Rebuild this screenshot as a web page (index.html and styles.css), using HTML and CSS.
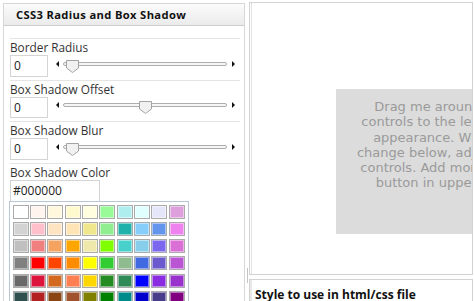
FILE: index.html
```html
<!DOCTYPE html>
<html>
<head>
<meta charset="utf-8">
<link rel="stylesheet" href="styles.css">
</head>
<body>
<div class="app">
  <aside class="left">
    <div class="left-head">CSS3 Radius and Box Shadow</div>
    <div class="left-body">
      <div class="field">
        <div class="label">Border Radius</div>
        <div class="row">
          <div class="num">0</div>
          <div class="slider">
            <span class="arr arr-l"></span>
            <div class="track">
              <svg class="thumb" style="left:1.7px" width="13" height="13" viewBox="0 0 13 13"><polygon points="0.5,0.5 12.5,0.5 12.5,8 6.5,12.5 0.5,8" fill="#f1f1f1" stroke="#a3a3a3"/></svg>
            </div>
            <span class="arr arr-r"></span>
          </div>
        </div>
      </div>
      <div class="field">
        <div class="label">Box Shadow Offset</div>
        <div class="row">
          <div class="num">0</div>
          <div class="slider">
            <span class="arr arr-l"></span>
            <div class="track">
              <svg class="thumb" style="left:75px" width="13" height="13" viewBox="0 0 13 13"><polygon points="0.5,0.5 12.5,0.5 12.5,8 6.5,12.5 0.5,8" fill="#f1f1f1" stroke="#a3a3a3"/></svg>
            </div>
            <span class="arr arr-r"></span>
          </div>
        </div>
      </div>
      <div class="field">
        <div class="label">Box Shadow Blur</div>
        <div class="row">
          <div class="num">0</div>
          <div class="slider">
            <span class="arr arr-l"></span>
            <div class="track">
              <svg class="thumb" style="left:1.7px" width="13" height="13" viewBox="0 0 13 13"><polygon points="0.5,0.5 12.5,0.5 12.5,8 6.5,12.5 0.5,8" fill="#f1f1f1" stroke="#a3a3a3"/></svg>
            </div>
            <span class="arr arr-r"></span>
          </div>
        </div>
      </div>
      <div class="field field-color">
        <div class="label">Box Shadow Color</div>
        <div class="hex">#000000</div>
        <div class="palette">
          <span class="sw" style="background:#ffffff"></span>
          <span class="sw" style="background:#fff5ee"></span>
          <span class="sw" style="background:#fff8dc"></span>
          <span class="sw" style="background:#fffacd"></span>
          <span class="sw" style="background:#ffffe0"></span>
          <span class="sw" style="background:#98fb98"></span>
          <span class="sw" style="background:#afeeee"></span>
          <span class="sw" style="background:#e0ffff"></span>
          <span class="sw" style="background:#e6e6fa"></span>
          <span class="sw" style="background:#dda0dd"></span>

          <span class="sw" style="background:#d3d3d3"></span>
          <span class="sw" style="background:#ffc0cb"></span>
          <span class="sw" style="background:#ffe4c4"></span>
          <span class="sw" style="background:#ffe4b5"></span>
          <span class="sw" style="background:#f0e68c"></span>
          <span class="sw" style="background:#90ee90"></span>
          <span class="sw" style="background:#20b2aa"></span>
          <span class="sw" style="background:#87cefa"></span>
          <span class="sw" style="background:#6495ed"></span>
          <span class="sw" style="background:#ee82ee"></span>

          <span class="sw" style="background:#c0c0c0"></span>
          <span class="sw" style="background:#f08080"></span>
          <span class="sw" style="background:#f4a460"></span>
          <span class="sw" style="background:#ffa500"></span>
          <span class="sw" style="background:#eee8aa"></span>
          <span class="sw" style="background:#7fff00"></span>
          <span class="sw" style="background:#48d1cc"></span>
          <span class="sw" style="background:#87ceeb"></span>
          <span class="sw" style="background:#7b68ee"></span>
          <span class="sw" style="background:#da70d6"></span>

          <span class="sw" style="background:#808080"></span>
          <span class="sw" style="background:#ff0000"></span>
          <span class="sw" style="background:#ff4500"></span>
          <span class="sw" style="background:#ff8c00"></span>
          <span class="sw" style="background:#ffff00"></span>
          <span class="sw" style="background:#32cd32"></span>
          <span class="sw" style="background:#8fbc8f"></span>
          <span class="sw" style="background:#4169e1"></span>
          <span class="sw" style="background:#6a5acd"></span>
          <span class="sw" style="background:#ba55d3"></span>

          <span class="sw" style="background:#696969"></span>
          <span class="sw" style="background:#dc143c"></span>
          <span class="sw" style="background:#d2691e"></span>
          <span class="sw" style="background:#ff7f50"></span>
          <span class="sw" style="background:#ffd700"></span>
          <span class="sw" style="background:#228b22"></span>
          <span class="sw" style="background:#2e8b57"></span>
          <span class="sw" style="background:#0000ff"></span>
          <span class="sw" style="background:#8a2be2"></span>
          <span class="sw" style="background:#9932cc"></span>

          <span class="sw" style="background:#2f4f4f"></span>
          <span class="sw" style="background:#b22222"></span>
          <span class="sw" style="background:#8b4513"></span>
          <span class="sw" style="background:#a0522d"></span>
          <span class="sw" style="background:#808000"></span>
          <span class="sw" style="background:#008000"></span>
          <span class="sw" style="background:#008b8b"></span>
          <span class="sw" style="background:#0000cd"></span>
          <span class="sw" style="background:#483d8b"></span>
          <span class="sw" style="background:#800080"></span>
        </div>
      </div>
    </div>
  </aside>
  <div class="splitter"><span class="grip"></span></div>
  <main class="right">
    <section class="canvas">
      <div class="box">Drag me around and use the<br>controls to the left to change my<br>appearance. When you see a<br>change below, adjust all the other<br>controls. Add more ones with the<br>button in upper right corner.</div>
    </section>
    <section class="code">
      <div class="code-title">Style to use in html/css file</div>
    </section>
  </main>
</div>
</body>
</html>
```
FILE: styles.css
```css
html, body {
  margin: 0;
  padding: 0;
  background: #ffffff;
  overflow: hidden;
}
body {
  width: 474px;
  height: 301px;
  font-family: "Open Sans", "Noto Sans", sans-serif;
  color: #333333;
}
.app {
  display: flex;
  align-items: flex-start;
  height: 301px;
  padding: 3px 0 0 3px;
  box-sizing: border-box;
}

/* ---------- left panel ---------- */
.left {
  width: 242px;
  flex: none;
  height: 320px;
  box-sizing: border-box;
  border: 1px solid #d7d7d7;
  background: #ffffff;
}
.left-head {
  height: 21px;
  border-bottom: 1px solid #cdcdcd;
  background: linear-gradient(#fbfbfb, #ebebeb);
  padding-left: 12px;
  font-weight: 700;
  font-size: 11.2px;
  line-height: 21px;
  letter-spacing: 0.35px;
  color: #111111;
}
.left-body {
  padding: 12px 4px 0 6px;
}
.field {
  border-top: 1px solid #e4e4e4;
  padding: 1px 0 3px 0;
}
.label {
  font-size: 11.8px;
  line-height: 14px;
  height: 14px;
  color: #333333;
  white-space: nowrap;
}
.row {
  display: flex;
  align-items: flex-start;
  margin-top: 1px;
}
.num {
  width: 38px;
  height: 21.5px;
  box-sizing: border-box;
  border: 1px solid #d4d4d4;
  font-size: 12px;
  line-height: 19px;
  padding-left: 3px;
  color: #222222;
  flex: none;
}
.slider {
  flex: 1;
  display: flex;
  align-items: center;
  height: 14px;
  margin-top: 1.5px;
  padding: 0 5px 0 8px;
}
.arr {
  width: 0;
  height: 0;
  flex: none;
  border-top: 3px solid transparent;
  border-bottom: 3px solid transparent;
}
.arr-l {
  border-right: 3px solid #111111;
  margin-right: 4px;
}
.arr-r {
  border-left: 3px solid #111111;
  margin-left: 5px;
}
.track {
  flex: 1;
  height: 4px;
  box-sizing: border-box;
  border: 1px solid #adadad;
  border-radius: 2px;
  background: #f6f6f6;
  position: relative;
}
.thumb {
  position: absolute;
  top: -3px;
  display: block;
}

.field-color {
  padding-bottom: 0;
}
.hex {
  margin-top: 1px;
  width: 90px;
  height: 21px;
  box-sizing: border-box;
  border: 1px solid #d4d4d4;
  border-bottom: none;
  font-size: 12px;
  line-height: 19px;
  padding-left: 2px;
  color: #222222;
}
.palette {
  margin-left: -1px;
  width: 180px;
  box-sizing: border-box;
  border: 1px solid #b7c7d7;
  padding: 3px 3px 6px 2.6px;
  display: grid;
  grid-template-columns: repeat(10, 16px);
  grid-auto-rows: 14px;
  column-gap: 1.33px;
  row-gap: 3.33px;
  background: #ffffff;
}
.sw {
  display: block;
  box-sizing: border-box;
  border: 1px solid #ababab;
  box-shadow: inset 0 0 0 1px rgba(255, 255, 255, 0.45);
}

/* ---------- splitter ---------- */
.splitter {
  width: 4px;
  flex: none;
  height: 298px;
  display: flex;
  align-items: flex-start;
  justify-content: center;
}
.grip {
  margin-top: 265px;
  width: 1px;
  height: 15px;
  background: #c4c4c4;
}

/* ---------- right panel ---------- */
.right {
  flex: none;
  width: 224px;
  display: flex;
  flex-direction: column;
  margin-top: -1px;
}
.canvas {
  position: relative;
  height: 271px;
  border: 1px solid #d2d2d2;
  box-shadow: inset 1px 0 0 #ffffff, inset 2px 0 0 #e2e2e2;
  overflow: hidden;
}
.box {
  position: absolute;
  left: 86px;
  top: 86px;
  width: 264px;
  height: 145px;
  box-sizing: border-box;
  padding-top: 10px;
  background: #dcdcdc;
  color: #9a9a9a;
  font-family: "DejaVu Sans", Verdana, sans-serif;
  font-size: 13px;
  line-height: 15.3px;
  text-align: center;
  white-space: nowrap;
}
.code {
  margin-top: 4px;
  height: 40px;
  border: 1px solid #d2d2d2;
  box-shadow: inset 2px 0 0 #e8e8e8;
  padding: 7px 0 0 5px;
  overflow: hidden;
}
.code-title {
  font-weight: 700;
  font-size: 12px;
  line-height: 16px;
  color: #111111;
  white-space: nowrap;
}
```
